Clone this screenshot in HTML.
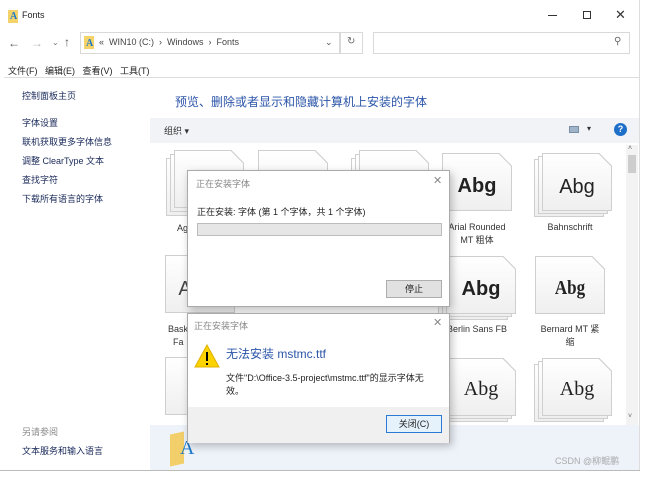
<!DOCTYPE html>
<html><head><meta charset="utf-8"><style>
*{margin:0;padding:0;box-sizing:border-box}
body{width:658px;height:477px;background:#fff;position:relative;overflow:hidden;font-family:"Liberation Sans","Noto Sans CJK SC",sans-serif;font-size:9px;color:#222}
.a{position:absolute;white-space:nowrap}
.pw{position:absolute;width:70px;height:58px;background:#cfcfcf;clip-path:polygon(0 0,82% 0,100% 22%,100% 100%,0 100%)}
.pw::after{content:"";position:absolute;left:1px;top:1px;right:1px;bottom:1px;background:linear-gradient(#fff,#efefef);clip-path:polygon(0 0,82% 0,100% 22%,100% 100%,0 100%)}
.abg{position:absolute;width:70px;text-align:center;font-size:20px;color:#222}
.lb{position:absolute;width:90px;text-align:center;font-size:9px;color:#333;line-height:13px}
.nav{position:absolute;left:22px;font-size:9px;color:#1a2a5a}
.dlg{position:absolute;left:187px;width:263px;background:#fff;border:1px solid #aaa;box-shadow:2px 3px 8px rgba(0,0,0,.25)}
.btn{position:absolute;left:198px;width:56px;height:18px;background:#e1e1e1;border:1px solid #adadad;text-align:center;font-size:9px;line-height:16px}
</style></head><body>
<div class="a" style="left:639px;top:0;width:1px;height:471px;background:#ddd"></div>
<div class="a" style="left:0;top:470px;width:640px;height:1px;background:#bbb"></div>
<!-- title -->
<div class="a" style="left:8px;top:10px;width:10px;height:13px;background:#f4d46a"></div>
<div class="a" style="left:10px;top:11px;font:bold 10px 'Liberation Serif',serif;color:#1c79c9">A</div>
<div class="a" style="left:22px;top:10px;font-size:9px">Fonts</div>
<div class="a" style="left:548px;top:15px;width:9px;height:1px;background:#333"></div>
<div class="a" style="left:583px;top:11px;width:8px;height:8px;border:1px solid #333"></div>
<div class="a" style="left:615px;top:7px;font-size:13px;color:#333">✕</div>
<!-- address row -->
<div class="a" style="left:8px;top:36px;font-size:12px;color:#555">←</div>
<div class="a" style="left:31px;top:36px;font-size:12px;color:#bbb">→</div>
<div class="a" style="left:52px;top:38px;font-size:8px;color:#777">⌄</div>
<div class="a" style="left:64px;top:35px;font-size:12px;color:#555">↑</div>
<div class="a" style="left:80px;top:32px;width:260px;height:22px;border:1px solid #d9d9d9"></div>
<div class="a" style="left:84px;top:36px;width:10px;height:13px;background:#f4d46a"></div>
<div class="a" style="left:86px;top:38px;font:bold 10px 'Liberation Serif',serif;color:#1c79c9">A</div>
<div class="a" style="left:99px;top:37px;font-size:9px;color:#444">«&nbsp; WIN10 (C:) &nbsp;›&nbsp; Windows &nbsp;›&nbsp; Fonts</div>
<div class="a" style="left:325px;top:37px;font-size:9px;color:#555">⌄</div>
<div class="a" style="left:340px;top:32px;width:23px;height:22px;border:1px solid #d9d9d9"></div>
<div class="a" style="left:347px;top:36px;font-size:10px;color:#666">↻</div>
<div class="a" style="left:373px;top:32px;width:257px;height:22px;border:1px solid #d9d9d9"></div>
<div class="a" style="left:614px;top:36px;font-size:10px;color:#666">⚲</div>
<!-- menu -->
<div class="a" style="left:8px;top:64px;font-size:9px">文件(F) &nbsp; 编辑(E) &nbsp; 查看(V) &nbsp; 工具(T)</div>
<div class="a" style="left:4px;top:77px;width:635px;height:1px;background:#ddd"></div>
<!-- nav -->
<div class="nav" style="top:89px">控制面板主页</div>
<div class="nav" style="top:116px">字体设置</div>
<div class="nav" style="top:135px">联机获取更多字体信息</div>
<div class="nav" style="top:154px">调整 ClearType 文本</div>
<div class="nav" style="top:173px">查找字符</div>
<div class="nav" style="top:192px">下载所有语言的字体</div>
<div class="nav" style="top:425px;color:#888">另请参阅</div>
<div class="nav" style="top:444px">文本服务和输入语言</div>
<div class="a" style="left:175px;top:93px;font-size:12px;color:#2b55a8">预览、删除或者显示和隐藏计算机上安装的字体</div>
<!-- toolbar -->
<div class="a" style="left:150px;top:118px;width:489px;height:25px;background:#f1f3f6"></div>
<div class="a" style="left:164px;top:124px;font-size:9px;color:#333">组织 ▾</div>
<div class="a" style="left:569px;top:126px;width:10px;height:7px;background:#9fb4c8;border:1px solid #7a8fa6"></div>
<div class="a" style="left:587px;top:124px;font-size:8px;color:#333">▾</div>
<div class="a" style="left:614px;top:123px;width:13px;height:13px;border-radius:50%;background:#1d6fc8;color:#fff;font-size:9px;font-weight:bold;text-align:center;line-height:13px">?</div>
<!-- scrollbar -->
<div class="a" style="left:626px;top:145px;width:12px;height:280px;background:#f3f3f3"></div>
<div class="a" style="left:628px;top:155px;width:8px;height:18px;background:#cdcdcd"></div>
<div class="a" style="left:628px;top:145px;font-size:7px;color:#666">˄</div>
<div class="a" style="left:628px;top:413px;font-size:7px;color:#666">˅</div>
<!-- bottom pane -->
<div class="a" style="left:150px;top:425px;width:489px;height:45px;background:#eef3fa"></div>
<div class="a" style="left:170px;top:433px;width:14px;height:32px;background:#f3cf6b;transform:skewY(-12deg)"></div>
<div class="a" style="left:180px;top:437px;font:20px 'Liberation Serif',serif;color:#1c79c9">A</div>
<div class="a" style="left:555px;top:454px;font-size:9px;color:#aaa">CSDN @柳鲲鹏</div>
<!-- row1 -->
<div class="pw" style="left:166px;top:158px"></div><div class="pw" style="left:170px;top:154px"></div><div class="pw" style="left:174px;top:150px"></div>
<div class="pw" style="left:258px;top:150px"></div>
<div class="pw" style="left:351px;top:158px"></div><div class="pw" style="left:355px;top:154px"></div><div class="pw" style="left:359px;top:150px"></div>
<div class="pw" style="left:442px;top:153px"></div><div class="abg" style="left:442px;top:175px;font-weight:bold">Abg</div>
<div class="pw" style="left:534px;top:159px"></div><div class="pw" style="left:538px;top:156px"></div><div class="pw" style="left:542px;top:153px"></div><div class="abg" style="left:542px;top:176px">Abg</div>
<div class="lb" style="left:160px;top:222px;text-align:left;padding-left:17px">Ag</div>
<div class="lb" style="left:432px;top:221px">Arial Rounded<br>MT 粗体</div>
<div class="lb" style="left:525px;top:221px">Bahnschrift</div>
<!-- row2 -->
<div class="pw" style="left:165px;top:255px"></div><div class="abg" style="left:150px;top:278px;color:#444">A</div>
<div class="pw" style="left:438px;top:262px"></div><div class="pw" style="left:442px;top:259px"></div><div class="pw" style="left:446px;top:256px"></div><div class="abg" style="left:446px;top:278px;font-weight:bold">Abg</div>
<div class="pw" style="left:535px;top:256px"></div><div class="abg" style="left:535px;top:277px;font:bold 20px 'Liberation Serif',serif;transform:scaleX(.85)">Abg</div>
<div class="lb" style="left:160px;top:323px;text-align:left;padding-left:8px">Bask<br>&nbsp;&nbsp;Fa</div>
<div class="lb" style="left:432px;top:323px">Berlin Sans FB</div>
<div class="lb" style="left:525px;top:323px">Bernard MT 紧<br>缩</div>
<!-- row3 -->
<div class="pw" style="left:165px;top:357px"></div>
<div class="pw" style="left:438px;top:364px"></div><div class="pw" style="left:442px;top:361px"></div><div class="pw" style="left:446px;top:358px"></div><div class="abg" style="left:446px;top:378px;font-family:'Liberation Serif',serif">Abg</div>
<div class="pw" style="left:534px;top:364px"></div><div class="pw" style="left:538px;top:361px"></div><div class="pw" style="left:542px;top:358px"></div><div class="abg" style="left:542px;top:378px;font-family:'Liberation Serif',serif">Abg</div>
<!-- dialog 1 -->
<div class="dlg" style="top:170px;height:137px">
 <div class="a" style="left:8px;top:6px;color:#888">正在安装字体</div>
 <div class="a" style="left:245px;top:3px;font-size:11px;color:#888">✕</div>
 <div class="a" style="left:9px;top:34px">正在安装: 字体 (第 1 个字体，共 1 个字体)</div>
 <div class="a" style="left:9px;top:52px;width:245px;height:13px;background:#e6e6e6;border:1px solid #bcbcbc"></div>
 <div class="btn" style="top:109px">停止</div>
</div>
<!-- dialog 2 -->
<div class="dlg" style="top:313px;height:130px">
 <div class="a" style="left:6px;top:5px;color:#888">正在安装字体</div>
 <div class="a" style="left:245px;top:2px;font-size:11px;color:#888">✕</div>
 <svg class="a" style="left:6px;top:30px" width="26" height="24"><path d="M13 1 L25 23 L1 23 Z" fill="#fbd300" stroke="#e0b000"/><rect x="12" y="8" width="2" height="9" fill="#000"/><rect x="12" y="19" width="2" height="2" fill="#000"/></svg>
 <div class="a" style="left:38px;top:31px;font-size:12px;color:#2b55a8">无法安装 mstmc.ttf</div>
 <div class="a" style="left:38px;top:57px">文件"D:\Office-3.5-project\mstmc.ttf"的显示字体无</div>
 <div class="a" style="left:38px;top:70px">效。</div>
 <div class="a" style="left:0;top:93px;width:261px;height:36px;background:#f0f0f0"></div>
 <div class="btn" style="top:101px;border:1px solid #2a7ad6;background:#e5f1fb">关闭(C)</div>
</div>
</body></html>
